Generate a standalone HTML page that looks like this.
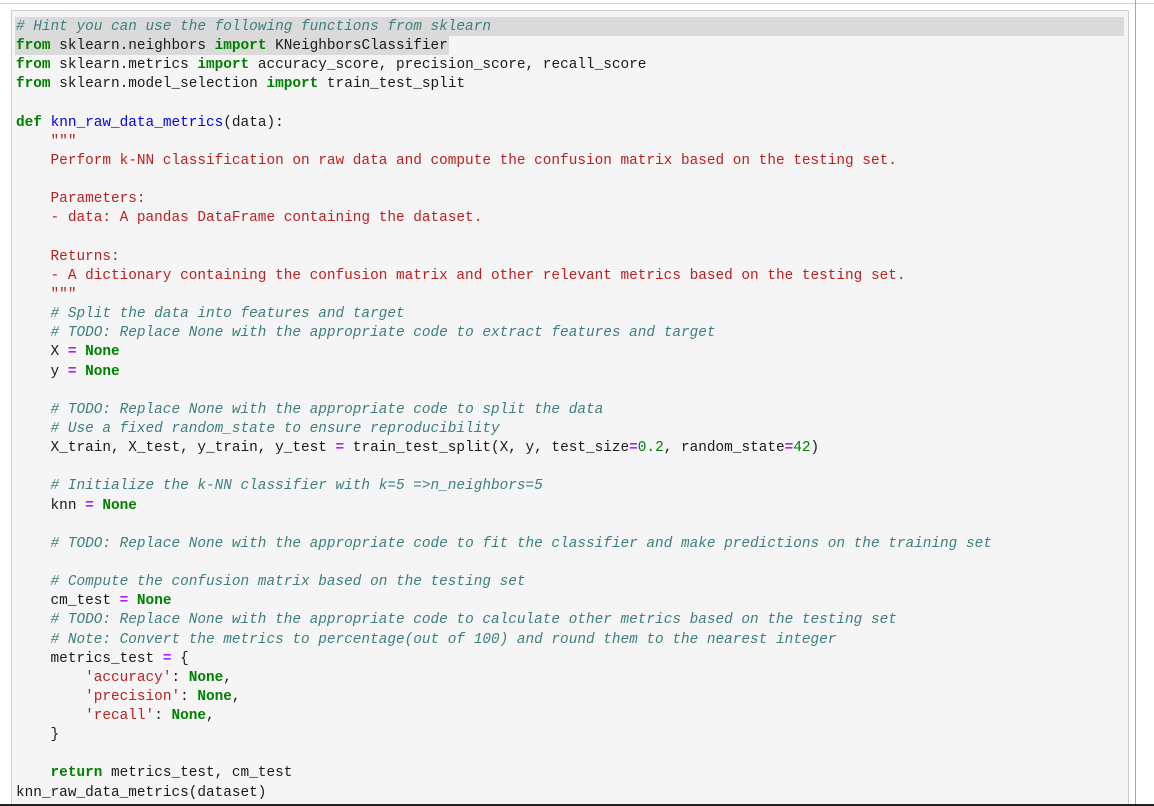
<!DOCTYPE html>
<html><head><meta charset="utf-8"><style>
html,body{margin:0;padding:0;background:#fff;width:1154px;height:806px;overflow:hidden;position:relative}
.top{position:absolute;left:0;top:3px;width:1154px;height:1px;background:#cfcfcf}
.box{position:absolute;left:11px;top:10px;width:1116px;height:800px;border:1px solid #cfcfcf;background:#f5f5f5}
.vr{position:absolute;left:1135px;top:0;width:1px;height:806px;background:#a8a8a8}
.bot{position:absolute;left:0;top:804px;width:1154px;height:2px;background:#222}
.hl1{position:absolute;left:15px;top:17px;width:1109px;height:19px;background:#dadada}
.hl2{position:absolute;left:15px;top:36px;width:434px;height:19px;background:#dadada}
pre{position:absolute;left:16px;top:18px;margin:0;font-family:"Liberation Mono",monospace;font-size:14.4px;line-height:19.14px;color:#1a1a1a}
.c{color:#3d7f7f;font-style:italic}.k{color:#008000;font-weight:bold}.f{color:#0000ff}.s{color:#ba2121}.o{color:#aa22ff;font-weight:bold}.n{color:#008000}
</style></head><body>
<div class="top"></div><div class="box"></div><div class="vr"></div>
<div class="hl1"></div><div class="hl2"></div>
<pre><span class="c"># Hint you can use the following functions from sklearn</span>
<span class="k">from</span> sklearn.neighbors <span class="k">import</span> KNeighborsClassifier
<span class="k">from</span> sklearn.metrics <span class="k">import</span> accuracy_score, precision_score, recall_score
<span class="k">from</span> sklearn.model_selection <span class="k">import</span> train_test_split

<span class="k">def</span> <span class="f">knn_raw_data_metrics</span>(data):
<span class="s">    """
    Perform k-NN classification on raw data and compute the confusion matrix based on the testing set.

    Parameters:
    - data: A pandas DataFrame containing the dataset.

    Returns:
    - A dictionary containing the confusion matrix and other relevant metrics based on the testing set.
    """</span>
    <span class="c"># Split the data into features and target</span>
    <span class="c"># TODO: Replace None with the appropriate code to extract features and target</span>
    X <span class="o">=</span> <span class="k">None</span>
    y <span class="o">=</span> <span class="k">None</span>

    <span class="c"># TODO: Replace None with the appropriate code to split the data</span>
    <span class="c"># Use a fixed random_state to ensure reproducibility</span>
    X_train, X_test, y_train, y_test <span class="o">=</span> train_test_split(X, y, test_size<span class="o">=</span><span class="n">0.2</span>, random_state<span class="o">=</span><span class="n">42</span>)

    <span class="c"># Initialize the k-NN classifier with k=5 =&gt;n_neighbors=5</span>
    knn <span class="o">=</span> <span class="k">None</span>

    <span class="c"># TODO: Replace None with the appropriate code to fit the classifier and make predictions on the training set</span>

    <span class="c"># Compute the confusion matrix based on the testing set</span>
    cm_test <span class="o">=</span> <span class="k">None</span>
    <span class="c"># TODO: Replace None with the appropriate code to calculate other metrics based on the testing set</span>
    <span class="c"># Note: Convert the metrics to percentage(out of 100) and round them to the nearest integer</span>
    metrics_test <span class="o">=</span> {
        <span class="s">'accuracy'</span>: <span class="k">None</span>,
        <span class="s">'precision'</span>: <span class="k">None</span>,
        <span class="s">'recall'</span>: <span class="k">None</span>,
    }

    <span class="k">return</span> metrics_test, cm_test
knn_raw_data_metrics(dataset)</pre>
<div class="bot"></div>
</body></html>
